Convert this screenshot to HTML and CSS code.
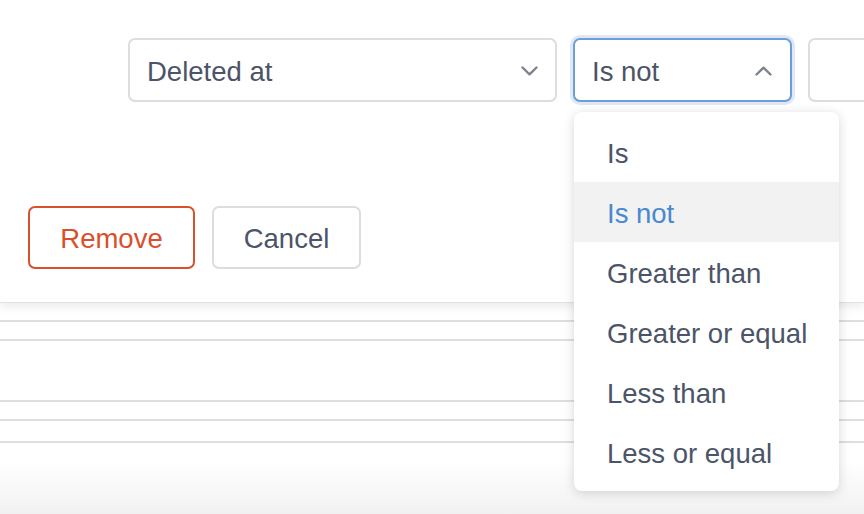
FILE: index.html
```html
<!DOCTYPE html>
<html>
<head>
<meta charset="utf-8">
<link rel="stylesheet" href="styles.css">
</head>
<body>
<div class="page">
  <div class="panel">
    <div class="filter-row">
      <div class="select field">
        <span class="value">Deleted at</span>
        <svg class="chev" width="17" height="10" viewBox="0 0 17 10"><path d="M1.5 1.5 L8.5 8.3 L15.5 1.5" fill="none" stroke="#7d828e" stroke-width="2.4" stroke-linecap="round" stroke-linejoin="round"/></svg>
      </div>
      <div class="select op open">
        <span class="value">Is not</span>
        <svg class="chev" width="17" height="10" viewBox="0 0 17 10"><path d="M1.5 8.5 L8.5 1.7 L15.5 8.5" fill="none" stroke="#7d828e" stroke-width="2.4" stroke-linecap="round" stroke-linejoin="round"/></svg>
        <ul class="menu">
          <li class="item">Is</li>
          <li class="item active">Is not</li>
          <li class="item">Greater than</li>
          <li class="item">Greater or equal</li>
          <li class="item">Less than</li>
          <li class="item">Less or equal</li>
        </ul>
      </div>
      <div class="select input"></div>
    </div>
    <div class="actions">
      <button class="btn btn-remove">Remove</button>
      <button class="btn btn-cancel">Cancel</button>
    </div>
  </div>
  <div class="rows">
    <div class="row r1"></div>
    <div class="row r2"></div>
    <div class="row r3"></div>
    <div class="row r4"></div>
    <div class="row r5"></div>
  </div>
  <div class="fade"></div>
</div>
</body>
</html>
```
FILE: styles.css
```css
* { box-sizing: border-box; }
html, body {
  margin: 0;
  padding: 0;
  background: #ffffff;
  overflow: hidden;
}
body {
  font-family: "Liberation Sans", Arial, sans-serif;
  font-size: 27.5px;
  color: #4b5468;
}
.page {
  width: 864px;
  height: 514px;
  overflow: hidden;
  position: relative;
}
.panel {
  position: relative;
  z-index: 2;
  height: 302px;
  background: #ffffff;
  box-shadow: 0 1px 0 #e2e2e4, 0 4px 10px rgba(0, 0, 0, 0.09);
  padding-top: 38px;
}
.filter-row {
  display: flex;
  gap: 16px;
  padding-left: 128px;
  height: 64px;
}
.select {
  flex-shrink: 0;
  height: 64px;
  border: 2px solid #dcdce1;
  border-radius: 7px;
  display: flex;
  align-items: center;
  justify-content: space-between;
  padding: 3px 17px 0 17px;
  background: #fff;
}
.field { width: 429px; }
.op {
  position: relative;
  width: 219px;
  border-color: #6c9fd9;
  box-shadow: 0 0 0 3px #dfe8f4;
  padding-right: 18px;
}
.input { width: 200px; }
.value { line-height: 1; }
.chev { display: block; margin-top: -2px; }
.menu {
  position: absolute;
  top: 72px;
  left: -1px;
  width: 265px;
  margin: 0;
  padding: 10px 0 9px;
  list-style: none;
  background: #ffffff;
  border-radius: 8px;
  box-shadow: 0 2px 12px rgba(0, 0, 0, 0.16);
  z-index: 5;
}
.item {
  height: 60px;
  line-height: 57px;
  padding-top: 3px;
  padding-left: 33px;
  color: #4b5468;
  white-space: nowrap;
}
.item.active {
  background: #f2f2f2;
  color: #4a88cf;
}
.actions {
  display: flex;
  gap: 17px;
  padding-left: 28px;
  margin-top: 104px;
}
.btn {
  font-family: inherit;
  font-size: 27.5px;
  height: 63px;
  background: #fff;
  border-radius: 7px;
  padding: 2px 0 0;
  cursor: pointer;
}
.btn-remove {
  width: 167px;
  border: 2px solid #d9502c;
  color: #d9502c;
}
.btn-cancel {
  width: 149px;
  border: 2px solid #dcdce1;
  color: #4b5468;
}
.rows { position: relative; z-index: 1; }
.row { border-bottom: 2px solid #dedee2; }
.r1 { height: 20px; }
.r2 { height: 19px; }
.r3 { height: 61px; }
.r4 { height: 19px; }
.r5 { height: 22px; }
.fade {
  height: 72px;
  background: linear-gradient(to bottom, #ffffff 0%, #ffffff 25%, #f1f1f1 100%);
}
```
